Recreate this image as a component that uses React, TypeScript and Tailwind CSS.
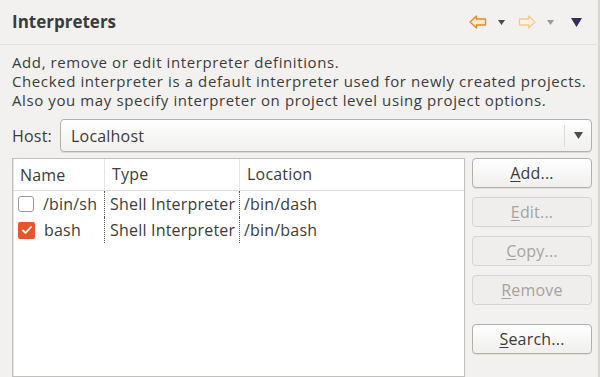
import React from 'react'

const font = { fontFamily: '"Open Sans", "Noto Sans", sans-serif' }

function ArrowLeft({ faded }: { faded?: boolean }) {
  return (
    <svg width="18" height="14" viewBox="0 0 18 14">
      <path
        d="M1 7 L7.5 1 V4 H16.5 V10 H7.5 V13 Z"
        fill={faded ? '#fbf0dd' : '#fde9c8'}
        stroke={faded ? '#f0c48a' : '#e08a2c'}
        strokeWidth="1.3"
        strokeLinejoin="round"
      />
    </svg>
  )
}

function ArrowRight({ faded }: { faded?: boolean }) {
  return (
    <svg width="18" height="14" viewBox="0 0 18 14">
      <path
        d="M17 7 L10.5 1 V4 H1.5 V10 H10.5 V13 Z"
        fill={faded ? '#fdf3e2' : '#fde9c8'}
        stroke={faded ? '#f2c98f' : '#e08a2c'}
        strokeWidth="1.3"
        strokeLinejoin="round"
      />
    </svg>
  )
}

function Tri({ color, w = 7 }: { color: string; w?: number }) {
  return (
    <svg width={w} height={w - 2} viewBox={`0 0 ${w} ${w - 2}`}>
      <path d={`M0 0 H${w} L${w / 2} ${w - 2} Z`} fill={color} />
    </svg>
  )
}

function Btn({ label, u, disabled }: { label: string; u: string; disabled?: boolean }) {
  const rest = label.slice(1)
  return (
    <button
      className={
        disabled
          ? 'h-[30px] w-[120px] rounded-[4px] border border-[#d6d4d0] bg-[#efeeec] text-[16px] tracking-[0.2px] text-[#a6a39e]'
          : 'h-[30px] w-[120px] rounded-[4px] border border-[#b3b0aa] bg-gradient-to-b from-white to-[#f0efed] text-[16px] tracking-[0.2px] text-[#3c3c3c] shadow-[0_1px_0_#e2e0dc]'
      }
    >
      <span className="underline underline-offset-2">{u}</span>
      {rest}
    </button>
  )
}

function Check({ on }: { on?: boolean }) {
  if (on)
    return (
      <div className="flex h-[17px] w-[17px] shrink-0 items-center justify-center rounded-[2px] bg-[#e5572a]">
        <svg width="12" height="10" viewBox="0 0 12 10">
          <path d="M1.5 5 L4.5 8 L10.5 1.5" fill="none" stroke="white" strokeWidth="1.8" />
        </svg>
      </div>
    )
  return <div className="h-[16px] w-[16px] shrink-0 rounded-[3px] border border-[#9c9a96] bg-white" />
}

export default function App() {
  const rows = [
    { on: false, name: '/bin/sh', type: 'Shell Interpreter', loc: '/bin/dash' },
    { on: true, name: 'bash', type: 'Shell Interpreter', loc: '/bin/bash' },
  ]
  return (
    <div style={font} className="flex h-[377px] w-[600px] flex-col overflow-hidden bg-[#f2f1f0] text-[#3c3c3c]">
      <div className="flex h-[45px] shrink-0 items-center border-r-2 border-b border-r-[#d8d6d2] border-b-[#e2e0dd] pl-3 pr-[16px]">
        <div className="text-[17px] font-bold text-[#3b3b3b]">Interpreters</div>
        <div className="ml-auto flex items-center">
          <ArrowLeft />
          <div className="ml-[11px] mr-[13px]">
            <Tri color="#4a4a4a" />
          </div>
          <ArrowRight faded />
          <div className="ml-[11px] mr-[17px]">
            <Tri color="#9a9a9a" />
          </div>
          <Tri color="#3d2a5c" w={11} />
        </div>
      </div>
      <div className="flex flex-1 flex-col border-r-2 border-r-[#d8d6d2] pl-3 pr-[6px] text-[16px] tracking-[0.2px]">
        <div className="mt-[8px] text-[15px] leading-[19px] tracking-[0.6px]">
          <div>Add, remove or edit interpreter definitions.</div>
          <div>Checked interpreter is a default interpreter used for newly created projects.</div>
          <div>Also you may specify interpreter on project level using project options.</div>
        </div>
        <div className="mt-[9px] flex items-center">
          <div className="w-[48px]">Host:</div>
          <div className="flex h-[33px] flex-1 items-center rounded-[4px] border border-[#b3b0aa] bg-gradient-to-b from-white to-[#f1f0ee] shadow-[0_1px_0_#dcdad6]">
            <div className="flex-1 pl-[10px]">Localhost</div>
            <div className="flex h-[22px] w-[27px] items-center justify-center border-l border-[#dedcd8]">
              <Tri color="#4d4d4d" w={9} />
            </div>
          </div>
        </div>
        <div className="mt-[6px] flex flex-1 gap-[7px]">
          <div className="flex w-[453px] flex-col border border-[#c2c0bb] bg-white shadow-[inset_1px_0_0_#e6e4e0]">
            <div className="flex h-[32px] items-center border-b border-[#e0dedb]">
              <div className="w-[91px] pl-[7px]">Name</div>
              <div className="w-[135px] self-stretch border-l border-[#e8e6e3] pl-[7px] leading-[31px]">Type</div>
              <div className="flex-1 self-stretch border-l border-[#e8e6e3] pl-[7px] leading-[31px]">Location</div>
            </div>
            {rows.map((r) => (
              <div key={r.name} className="flex h-[26px] items-center">
                <div className="flex w-[91px] items-center gap-[9px] overflow-hidden whitespace-nowrap pl-[5px]">
                  <Check on={r.on} />
                  <span>{r.name}</span>
                </div>
                <div className="w-[135px] self-stretch overflow-hidden whitespace-nowrap border-l border-dotted border-[#555] pl-[5px] leading-[26px]">{r.type}</div>
                <div className="flex-1 self-stretch border-l border-dotted border-[#555] pl-[4px] leading-[26px]">{r.loc}</div>
              </div>
            ))}
          </div>
          <div className="flex flex-col gap-[9px]">
            <Btn label="Add..." u="A" />
            <Btn label="Edit..." u="E" disabled />
            <Btn label="Copy..." u="C" disabled />
            <Btn label="Remove" u="R" disabled />
            <div className="mt-[10px]">
              <Btn label="Search..." u="S" />
            </div>
          </div>
        </div>
      </div>
    </div>
  )
}
